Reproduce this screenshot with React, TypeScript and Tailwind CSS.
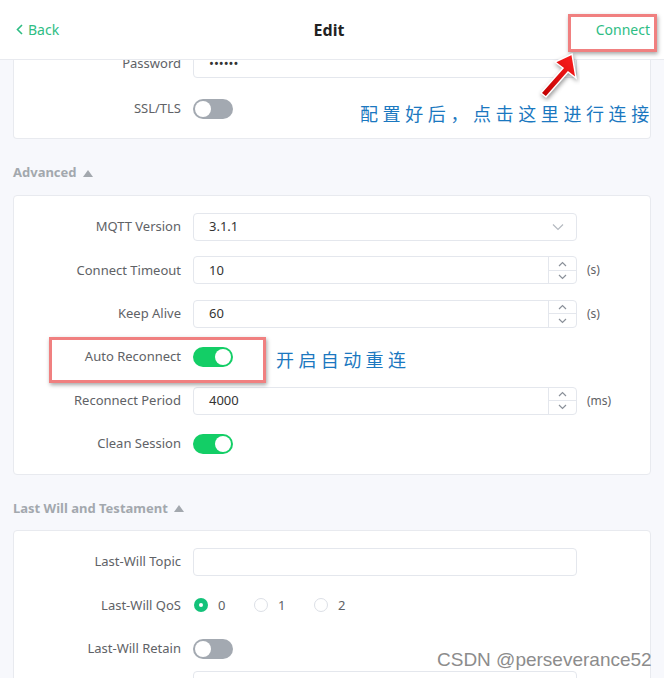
import type { ReactNode } from 'react';

const FONT = { fontFamily: '"Noto Sans", "Noto Sans CJK SC", sans-serif' };
const HAND = { fontFamily: '"Noto Sans CJK SC", sans-serif' };

const Toggle = ({ on }: { on: boolean }) => (
  <div
    className={`w-[40px] h-[20px] rounded-full flex items-center px-[2px] ${
      on ? 'bg-[#13ce66] justify-end' : 'bg-[#a3a9b1] justify-start'
    }`}
  >
    <div className="w-[16px] h-[16px] rounded-full bg-white" />
  </div>
);

const Stepper = () => (
  <div className="w-[28px] h-full border-l border-[#e4e7ed] flex flex-col">
    <div className="flex-1 flex items-center justify-center border-b border-[#e4e7ed]">
      <svg width="9" height="6" viewBox="0 0 9 6">
        <path d="M1 5 L4.5 1.5 L8 5" fill="none" stroke="#8a9099" strokeWidth="1.2" />
      </svg>
    </div>
    <div className="flex-1 flex items-center justify-center">
      <svg width="9" height="6" viewBox="0 0 9 6">
        <path d="M1 1 L4.5 4.5 L8 1" fill="none" stroke="#8a9099" strokeWidth="1.2" />
      </svg>
    </div>
  </div>
);

const Input = ({ value, number, select }: { value?: string; number?: boolean; select?: boolean }) => (
  <div className="w-[384px] h-[28px] border border-[#e4e7ed] rounded-[4px] bg-white flex items-center text-[13px] text-[#333]">
    <span className="flex-1 pl-[15px]">{value}</span>
    {number && <Stepper />}
    {select && (
      <svg className="mr-[12px]" width="12" height="8" viewBox="0 0 12 8">
        <path d="M1 1.5 L6 6.5 L11 1.5" fill="none" stroke="#b4b9c0" strokeWidth="1.2" />
      </svg>
    )}
  </div>
);

const Row = ({ label, children, unit, className = '' }: { label: string; children: ReactNode; unit?: string; className?: string }) => (
  <div className={`flex items-center h-[28px] ${className}`}>
    <div className="w-[179px] pr-[12px] text-right text-[13px] text-[#606266]">{label}</div>
    {children}
    {unit && <span className="ml-[10px] text-[12px] text-[#606266]">{unit}</span>}
  </div>
);

const Card = ({ children, className = '' }: { children: ReactNode; className?: string }) => (
  <div className={`mx-[13px] bg-white border border-[#e8eaef] rounded-[4px] flex flex-col ${className}`}>
    {children}
  </div>
);

const Title = ({ text }: { text: string }) => (
  <div className="px-[13px] pt-[24px] h-[56px] flex items-start">
    <div className="h-[20px] flex items-center gap-[6px] text-[13px] font-bold text-[#a3a8ae]">
      {text}
      <svg width="10" height="7" viewBox="0 0 10 7">
        <path d="M0 7 L5 0 L10 7 Z" fill="#a3a8ae" />
      </svg>
    </div>
  </div>
);

const Radio = ({ checked, label }: { checked?: boolean; label: string }) => (
  <div className="flex items-center w-[60px]">
    <div
      className={`w-[14px] h-[14px] rounded-full flex items-center justify-center ${
        checked ? 'bg-[#13c27a]' : 'border border-[#dcdfe6] bg-white'
      }`}
    >
      {checked && <div className="w-[4px] h-[4px] rounded-full bg-white" />}
    </div>
    <span className="ml-[10px] text-[13px] text-[#606266]">{label}</span>
  </div>
);

export default function App() {
  return (
    <div className="relative w-[664px] h-[678px] overflow-hidden bg-[#f7f8fc]" style={FONT}>
      <header className="relative z-10 h-[60px] bg-white border-b border-[#e8eaef] flex items-center pl-[16px] pr-[14px]">
        <div className="flex items-center gap-[5px] text-[14px] text-[#2ebd84] w-[120px]">
          <svg width="7" height="11" viewBox="0 0 7 11">
            <path d="M6 1 L1.5 5.5 L6 10" fill="none" stroke="#2ebd84" strokeWidth="1.6" />
          </svg>
          Back
        </div>
        <div className="flex-1 text-center text-[16px] font-bold text-[#222] pr-[8px]">Edit</div>
        <div className="w-[120px] text-right text-[14px] text-[#2ebd84]">Connect</div>
      </header>

      <div className="flex flex-col">
        <Card className="-mt-[10px] pb-[15px] gap-[17px] rounded-t-none border-t-0">
          <Row label="Password">
            <Input value="••••••" />
          </Row>
          <Row label="SSL/TLS">
            <Toggle on={false} />
          </Row>
        </Card>

        <Title text="Advanced" />
        <Card className="pt-[17px] pb-[16px] gap-[15.4px]">
          <Row label="MQTT Version">
            <Input value="3.1.1" select />
          </Row>
          <Row label="Connect Timeout" unit="(s)">
            <Input value="10" number />
          </Row>
          <Row label="Keep Alive" unit="(s)">
            <Input value="60" number />
          </Row>
          <Row label="Auto Reconnect">
            <Toggle on />
          </Row>
          <Row label="Reconnect Period" unit="(ms)">
            <Input value="4000" number />
          </Row>
          <Row label="Clean Session">
            <Toggle on />
          </Row>
        </Card>

        <Title text="Last Will and Testament" />
        <Card className="-mt-[1px] pt-[17px] pb-[16px] gap-[15.4px]">
          <Row label="Last-Will Topic">
            <Input />
          </Row>
          <Row label="Last-Will QoS">
            <div className="flex items-center pl-[1px]">
              <Radio checked label="0" />
              <Radio label="1" />
              <Radio label="2" />
            </div>
          </Row>
          <Row label="Last-Will Retain">
            <Toggle on={false} />
          </Row>
          <Row label="" className="-mt-[7px]">
            <Input />
          </Row>
        </Card>
      </div>

      {/* annotations */}
      <div className="absolute z-20 left-[568px] top-[14px] w-[89px] h-[38px] border-[3px] border-[#f08080] shadow-[1px_2px_4px_rgba(0,0,0,0.35)]" />
      <svg className="absolute z-20 left-[536px] top-[50px]" width="44" height="52" viewBox="0 0 44 52">
        <defs>
          <linearGradient id="ar" x1="0" y1="1" x2="1" y2="0">
            <stop offset="0" stopColor="#c00000" />
            <stop offset="1" stopColor="#ff2020" />
          </linearGradient>
        </defs>
        <path
          d="M36 4 L40 28 L32 22 L10 47 L5 43 L27 18 L19 12 Z"
          fill="url(#ar)"
          stroke="#ffffff"
          strokeWidth="1.5"
          style={{ filter: 'drop-shadow(1px 2px 2px rgba(0,0,0,0.4))' }}
        />
      </svg>
      <div
        className="absolute z-20 left-[360px] top-[100px] text-[18px] tracking-[4.6px] text-[#1b78c0] whitespace-nowrap"
        style={HAND}
      >
        配置好后，点击这里进行连接
      </div>

      <div className="absolute left-[49px] top-[337px] w-[217px] h-[46px] border-[3px] border-[#f08080] shadow-[1px_2px_4px_rgba(0,0,0,0.35)]" />
      <div
        className="absolute left-[276px] top-[346px] text-[18px] tracking-[4.4px] text-[#1b78c0] whitespace-nowrap"
        style={HAND}
      >
        开启自动重连
      </div>

      <div
        className="absolute left-[437px] top-[646px] text-[19px] text-[#8c8c8c] whitespace-nowrap"
        style={{ fontFamily: '"Liberation Sans", Arial, sans-serif' }}
      >
        CSDN @perseverance52
      </div>
    </div>
  );
}
